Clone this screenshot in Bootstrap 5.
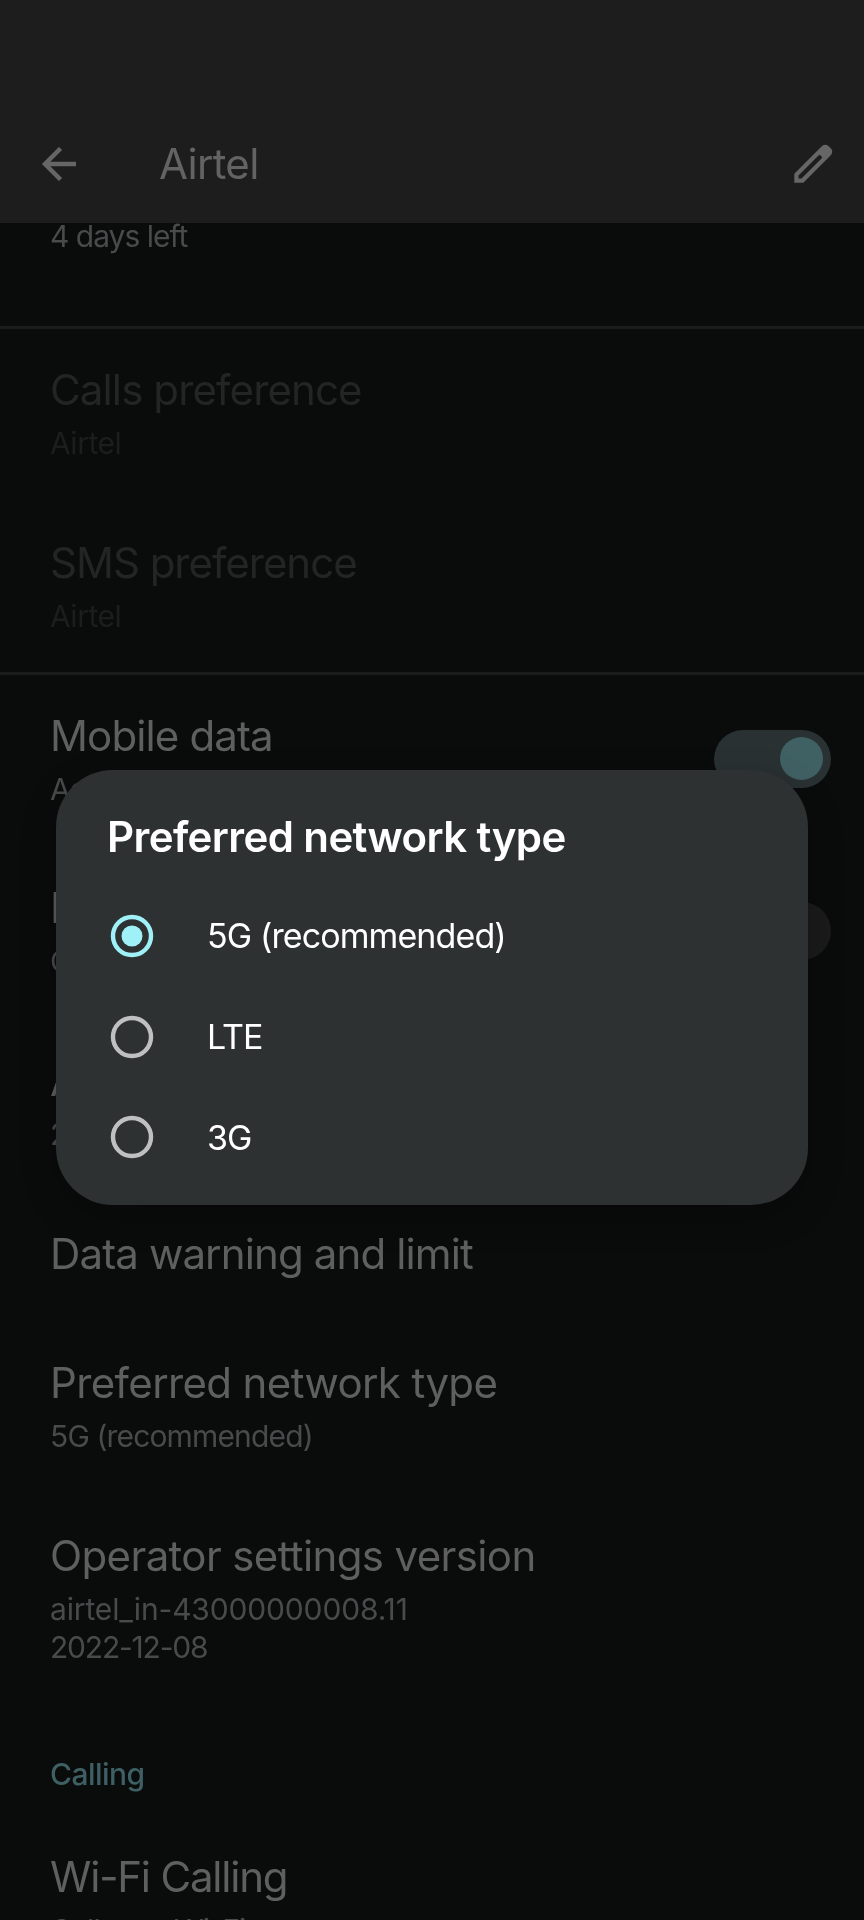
<!DOCTYPE html>
<html lang="en" data-bs-theme="dark">
<head>
<meta charset="utf-8">
<meta name="viewport" content="width=device-width, initial-scale=1">
<title>Airtel</title>
<link href="https://cdn.jsdelivr.net/npm/bootstrap@5.3.0/dist/css/bootstrap.min.css" rel="stylesheet">
<style>
  html, body { height: 100%; }
  body { background: #0a0c0b; font-family: Inter, Roboto, "Liberation Sans", sans-serif; color: #5f5f5f; overflow: hidden; }
  .screen { width: 864px; height: 1920px; will-change: transform; }
  .app-bar { height: 223px; background: #1d1d1d; padding: 104px 30px 0 40px; color: #666; }
  .bar-row { height: 120px; }
  .bar-title { font-size: 42px; line-height: 52px; letter-spacing: -.7px; margin-left: 81px; color: #636363; }
  .usage { height: 103px; padding: 0 50px; }
  .pref { height: 172.75px; padding: 38px 33px 0 50px; }
  .pref.ruled { border-top: 3px solid #1b1c1c; padding-top: 35px; }
  .pref.short { height: 129px; }
  .pref.tall { height: 210px; }
  .pref-title { font-size: 42px; line-height: 52px; letter-spacing: -.87px; margin-bottom: 8px; white-space: nowrap; }
  .pref-sub { font-size: 30px; line-height: 38px; letter-spacing: -.85px; color: #494a4b; white-space: nowrap; }
  .usage .pref-sub { line-height: 26px; letter-spacing: -1px; }
  .track-wide { letter-spacing: -.62px; }
  .track-tight { letter-spacing: -1.2px; }
  .track-sms { letter-spacing: -1px; }
  .build-id { letter-spacing: -.15px; }
  .build-date { letter-spacing: -1.2px; }
  .off .pref-title { color: #232424; }
  .off .pref-sub { color: #1c1d1d; letter-spacing: -.5px; }
  .group-label { font-size: 30px; line-height: 38px; font-weight: 500; letter-spacing: -.55px; color: #3e6064; padding: 53px 50px 0; height: 111px; }
  .toggle { width: 117px; height: 58px; border-radius: 29px; background: #293132; padding: 0 8px; margin-top: 20px; }
  .toggle.unset { background: #1b1b1b; }
  .thumb { width: 43px; height: 43px; border-radius: 50%; background: #406164; }
  .unset .thumb { background: #2b2b2b; }
  .sheet { left: 56px; top: 769.5px; width: 752px; height: 435px; border-radius: 57px; background: #2e3132; color: #fff; padding: 41px 51px 0 51px; box-shadow: 0 12px 34px rgba(0,0,0,.28); }
  .sheet-title { font-size: 42px; line-height: 52px; font-weight: 600; letter-spacing: -.6px; margin-bottom: 23px; white-space: nowrap; }
  .option { height: 100.8px; font-size: 34px; letter-spacing: -.9px; gap: 52px; padding-left: 2px; }
  .ring { width: 46px; height: 46px; color: #bfc1c1; }
  .ring.on { color: #9ff0f7; }
</style>
</head>
<body>
<main class="screen position-relative overflow-hidden">
  <header class="app-bar">
    <div class="bar-row d-flex align-items-center">
      <svg width="38" height="34" viewBox="0 0 38 34" fill="none" stroke="currentColor" stroke-width="4.400"><path d="M36 17H5M20.500 1.500 5 17 20.500 32.500"/></svg>
      <h1 class="bar-title fw-normal mb-0">Airtel</h1>
      <svg class="ms-auto" width="42" height="42" viewBox="0 0 42 42"><path fill="currentColor" fill-rule="evenodd" d="M2.300 39.700V30.700L30 3Q33.200 .6 36.400 3L39 5.600Q41.500 8.800 39 12L11.300 39.700ZM6.500 35.500H9.500L30 15V14L28 12H27L6.500 32.500Z"/></svg>
    </div>
  </header>
  <div class="usage"><div class="pref-sub">4 days left</div></div>
  <section>
    <div class="pref ruled off"><div class="pref-title">Calls preference</div><div class="pref-sub">Airtel</div></div>
    <div class="pref off"><div class="pref-title track-sms">SMS preference</div><div class="pref-sub">Airtel</div></div>
    <div class="pref ruled d-flex justify-content-between">
      <div><div class="pref-title">Mobile data</div><div class="pref-sub">Access data</div></div>
      <div class="toggle d-flex align-items-center justify-content-end"><span class="thumb"></span></div>
    </div>
    <div class="pref d-flex justify-content-between">
      <div><div class="pref-title">Roaming</div><div class="pref-sub">Connect</div></div>
      <div class="toggle unset d-flex align-items-center"><span class="thumb"></span></div>
    </div>
    <div class="pref"><div class="pref-title">App data usage</div><div class="pref-sub">2 GB used</div></div>
    <div class="pref short"><div class="pref-title">Data warning and limit</div></div>
    <div class="pref"><div class="pref-title track-wide">Preferred network type</div><div class="pref-sub">5G (recommended)</div></div>
    <div class="pref tall"><div class="pref-title track-wide">Operator settings version</div><div class="pref-sub build-id">airtel_in-43000000008.11</div><div class="pref-sub build-date">2022-12-08</div></div>
  </section>
  <section>
    <div class="group-label">Calling</div>
    <div class="pref"><div class="pref-title track-tight">Wi-Fi Calling</div><div class="pref-sub">Call over Wi-Fi</div></div>
  </section>
  <div class="sheet position-absolute" role="dialog" aria-labelledby="sheet-title">
    <h2 class="sheet-title" id="sheet-title">Preferred network type</h2>
    <div class="option d-flex align-items-center"><svg class="ring on" viewBox="0 0 46 46" fill="none" stroke="currentColor" stroke-width="4.400"><circle cx="23" cy="23" r="19"/><circle cx="23" cy="23" r="10.500" fill="currentColor" stroke="none"/></svg><span>5G (recommended)</span></div>
    <div class="option d-flex align-items-center"><svg class="ring" viewBox="0 0 46 46" fill="none" stroke="currentColor" stroke-width="4.400"><circle cx="23" cy="23" r="19"/></svg><span>LTE</span></div>
    <div class="option d-flex align-items-center"><svg class="ring" viewBox="0 0 46 46" fill="none" stroke="currentColor" stroke-width="4.400"><circle cx="23" cy="23" r="19"/></svg><span>3G</span></div>
  </div>
</main>
<script src="https://cdn.jsdelivr.net/npm/bootstrap@5.3.0/dist/js/bootstrap.bundle.min.js"></script>
</body>
</html>
